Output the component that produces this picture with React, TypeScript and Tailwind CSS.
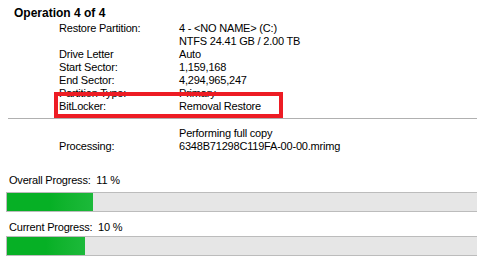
const rows: [string, string][] = [
  ['Restore Partition:', '4 - <NO NAME> (C:)'],
  ['', 'NTFS 24.41 GB / 2.00 TB'],
  ['Drive Letter', 'Auto'],
  ['Start Sector:', '1,159,168'],
  ['End Sector:', '4,294,965,247'],
  ['Partition Type:', 'Primary'],
];

const ProgressBar = ({ fill }: { fill: string }) => (
  <div className="ml-[6px] w-[480px] h-[20px] border border-[#bcbcbc] bg-[#e6e6e6]">
    <div className={`h-full bg-gradient-to-r from-[#06b025] via-[#06b025] to-[#1cb93a] ${fill}`} />
  </div>
);

export default function App() {
  return (
    <div
      className="w-[477px] h-[274px] overflow-hidden bg-white text-black text-[11px] tracking-[-0.2px]"
      style={{ fontFamily: '"Liberation Sans", Arial, sans-serif' }}
    >
      <div className="pl-[14px] pt-[6px] text-[12px] leading-[14px] font-bold tracking-normal">
        Operation 4 of 4
      </div>

      <div className="mt-[2px] pl-[59px] leading-[13px]">
        {rows.map(([label, value], i) => (
          <div key={i} className="flex">
            <div className="w-[120px]">{label}</div>
            <div>{value}</div>
          </div>
        ))}
        <div className="relative flex">
          <div className="w-[120px]">BitLocker:</div>
          <div>Removal Restore</div>
          <div className="absolute left-[-5px] top-[-8px] w-[229px] h-[26px] border-4 border-[#ed1c24]" />
        </div>
      </div>

      <div className="mt-[5px] ml-[8px] h-px bg-[#b0b0b0]" />

      <div className="mt-[8px] pl-[59px] leading-[13px]">
        <div className="flex">
          <div className="w-[120px]" />
          <div>Performing full copy</div>
        </div>
        <div className="flex">
          <div className="w-[120px]">Processing:</div>
          <div>6348B71298C119FA-00-00.mrimg</div>
        </div>
      </div>

      <div className="mt-[21px] pl-[9px] leading-[13px]">Overall Progress:&nbsp; 11 %</div>
      <div className="mt-[5px]">
        <ProgressBar fill="w-[86px]" />
      </div>

      <div className="mt-[9px] pl-[9px] leading-[13px]">Current Progress:&nbsp; 10 %</div>
      <div className="mt-[2px]">
        <ProgressBar fill="w-[78px]" />
      </div>
    </div>
  );
}
